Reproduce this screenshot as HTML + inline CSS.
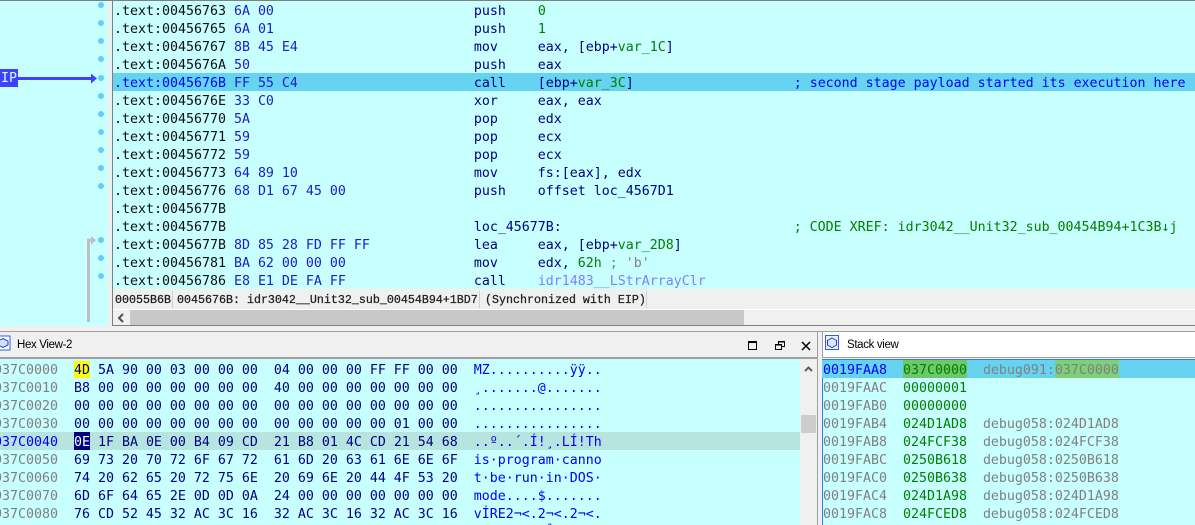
<!DOCTYPE html>
<html><head><meta charset="utf-8">
<style>
html,body{margin:0;padding:0;width:1195px;height:525px;overflow:hidden;background:#f0f0f0}
.a{position:absolute}
.p{position:absolute;overflow:hidden;background:#c8ffff}
.r{position:absolute;left:0;right:0;height:18px;white-space:pre;font:13.29px/22px "DejaVu Sans Mono","Liberation Mono",monospace;color:#101010}
.hl{background:#66d4f0}
.b{color:#1c1ccc}.m{color:#000080}.g{color:#008000}.c{color:#0000ff}.l{color:#8080ff}.y{color:#808080}
.dot{position:absolute;left:98px;width:6px;height:6px;border-radius:50%;background:#66ccff}
.st{position:absolute;top:289px;height:20px;font:11.67px/23px "Liberation Mono",monospace;color:#202020;white-space:pre;-webkit-text-stroke:.25px #202020}
.hx{color:#000080}.as{color:#0000ff}
.t{font:11.5px/14px "Liberation Sans",sans-serif;letter-spacing:-.35px;color:#000;position:absolute;white-space:pre}
</style></head><body>

<!-- top disassembly panel -->
<div class="a" style="left:0;top:0;width:1195px;height:1px;background:#808080"></div>
<div class="p" style="left:0;top:1px;width:108px;height:325px"></div>
<div class="a" style="left:108px;top:1px;width:4px;height:325px;background:#f0f0f0"></div>
<div class="a" style="left:112px;top:1px;width:1px;height:325px;background:#808080"></div>
<div class="p" style="left:113px;top:1px;width:1082px;height:288px">
<div style="position:absolute;left:1px;top:0;right:0;bottom:0">
<div class="r" style="top:0">.text:00456763 <span class="b">6A 00</span>                         <span class="m">push    </span><span class="g">0</span></div>
<div class="r" style="top:18px">.text:00456765 <span class="b">6A 01</span>                         <span class="m">push    </span><span class="g">1</span></div>
<div class="r" style="top:36px">.text:00456767 <span class="b">8B 45 E4</span>                      <span class="m">mov     eax, [ebp+</span><span class="g">var_1C</span><span class="m">]</span></div>
<div class="r" style="top:54px">.text:0045676A <span class="b">50</span>                            <span class="m">push    eax</span></div>
<div class="r hl" style="top:72px;left:-1px;padding-left:1px"><span class="c">.text:0045676B </span><span class="b">FF 55 C4</span>                      <span class="m">call    [ebp+</span><span class="g">var_3C</span><span class="m">]</span>                    <span class="c">; second stage payload started its execution here</span></div>
<div class="r" style="top:90px">.text:0045676E <span class="b">33 C0</span>                         <span class="m">xor     eax, eax</span></div>
<div class="r" style="top:108px">.text:00456770 <span class="b">5A</span>                            <span class="m">pop     edx</span></div>
<div class="r" style="top:126px">.text:00456771 <span class="b">59</span>                            <span class="m">pop     ecx</span></div>
<div class="r" style="top:144px">.text:00456772 <span class="b">59</span>                            <span class="m">pop     ecx</span></div>
<div class="r" style="top:162px">.text:00456773 <span class="b">64 89 10</span>                      <span class="m">mov     fs:[eax], edx</span></div>
<div class="r" style="top:180px">.text:00456776 <span class="b">68 D1 67 45 00</span>                <span class="m">push    offset loc_4567D1</span></div>
<div class="r" style="top:198px">.text:0045677B</div>
<div class="r" style="top:216px">.text:0045677B                               <span class="m">loc_45677B:</span>                             <span class="g">; CODE XREF: idr3042__Unit32_sub_00454B94+1C3B↓j</span></div>
<div class="r" style="top:234px">.text:0045677B <span class="b">8D 85 28 FD FF FF</span>             <span class="m">lea     eax, [ebp+</span><span class="g">var_2D8</span><span class="m">]</span></div>
<div class="r" style="top:252px">.text:00456781 <span class="b">BA 62 00 00 00</span>                <span class="m">mov     edx, </span><span class="g">62h</span> <span class="y">; 'b'</span></div>
<div class="r" style="top:270px">.text:00456786 <span class="b">E8 E1 DE FA FF</span>                <span class="m">call    </span><span class="l">idr1483__LStrArrayClr</span></div>
</div></div>

<!-- gutter dots -->
<div class="dot" style="top:2px"></div><div class="dot" style="top:20px"></div><div class="dot" style="top:38px"></div><div class="dot" style="top:56px"></div><div class="dot" style="top:75px"></div><div class="dot" style="top:93px"></div><div class="dot" style="top:111px"></div><div class="dot" style="top:129px"></div><div class="dot" style="top:147px"></div><div class="dot" style="top:165px"></div><div class="dot" style="top:183px"></div><div class="dot" style="top:237px"></div><div class="dot" style="top:255px"></div><div class="dot" style="top:273px"></div>

<!-- IP + arrows -->
<div class="a" style="left:0;top:69px;width:18px;height:18px;background:#4040ff;color:#c8ffff;font:13.29px/19px 'DejaVu Sans Mono',monospace;text-align:center">IP</div>
<svg class="a" style="left:0;top:0" width="112" height="330">
<rect x="18" y="77" width="74" height="3" fill="#4040ff"/>
<path d="M91 73.5 L97 78.5 L91 83.5 Z" fill="#4040ff"/>
<path d="M88.5 322 V240 H92" fill="none" stroke="#c0c0c0" stroke-width="3"/>
<path d="M91 236 L96 240 L91 245 Z" fill="#c0c0c0"/>
</svg>

<!-- status bar -->
<div class="a" style="left:113px;top:289px;width:1082px;height:20px;background:#f0f0f0"></div>
<div class="st" style="left:115px">00055B6B</div>
<div class="a" style="left:172px;top:291px;width:1px;height:17px;background:#d0d0d0"></div>
<div class="st" style="left:177px">0045676B: idr3042__Unit32_sub_00454B94+1BD7</div>
<div class="a" style="left:479px;top:291px;width:1px;height:17px;background:#d0d0d0"></div>
<div class="st" style="left:485px">(Synchronized with EIP)</div>
<div class="a" style="left:646px;top:291px;width:1px;height:17px;background:#d0d0d0"></div>

<!-- horizontal scrollbar -->
<div class="a" style="left:113px;top:309px;width:1082px;height:1px;background:#fff"></div>
<div class="a" style="left:113px;top:310px;width:1082px;height:15px;background:#f0f0f0"></div>
<div class="a" style="left:130px;top:310px;width:614px;height:15px;background:#c8c8c8"></div>
<svg class="a" style="left:113px;top:310px" width="17" height="15"><path d="M10 4 L6 8 L10 12" fill="none" stroke="#505050" stroke-width="2"/></svg>
<div class="a" style="left:113px;top:325px;width:1082px;height:1px;background:#808080"></div>
<div class="a" style="left:0;top:326px;width:1195px;height:5px;background:#f0f0f0"></div>
<div class="a" style="left:0;top:331px;width:1195px;height:1px;background:#a0a0a0"></div>

<!-- hex title -->
<div class="a" style="left:0;top:332px;width:817px;height:25px;background:#f0f0f0;border-right:1px solid #a0a0a0;border-bottom:1px solid #a0a0a0"></div>
<svg class="a" style="left:0;top:335px" width="12" height="16"><rect x="-4" y="1" width="14" height="14" fill="#fff" stroke="#3060e0"/><path d="M3 3.5 L8 6 V10 L3 12.5 L-2 10 V6 Z" fill="#d0e0ff" stroke="#2040d0"/></svg>
<div class="t" style="left:17px;top:338px">Hex View-2</div>
<svg class="a" style="left:740px;top:334px" width="80" height="20" fill="none" stroke="#000">
<rect x="8.5" y="7.5" width="8" height="8" stroke-width="1"/><path d="M8 8 H17" stroke-width="2"/>
<rect x="35.5" y="10.5" width="6" height="5"/><path d="M38.5 10 V7.5 H44.5 V12.5 H42" /><path d="M35 11 H42 M38 8 H45"/>
<path d="M62 8 L70 16 M70 8 L62 16" stroke-width="1.5"/>
</svg>
<div class="a" style="left:0;top:358px;width:818px;height:1px;background:#a0a0a0"></div>

<!-- hex panel -->
<div class="p" style="left:0;top:359px;width:800px;height:166px;background:#c8ffff">
<div class="a" style="left:0;top:73px;width:800px;height:18px;background:#b8e4e0"></div>
</div>
<div class="a" style="left:800px;top:359px;width:17px;height:166px;background:#f0f0f0"></div>
<div class="a" style="left:801px;top:415px;width:15px;height:18px;background:#cdcdcd"></div>
<svg class="a" style="left:800px;top:362px" width="17" height="14"><path d="M5 9 L8.5 5.5 L12 9" fill="none" stroke="#606060" stroke-width="2"/></svg>
<div class="a" style="left:817px;top:359px;width:1px;height:166px;background:#a0a0a0"></div>
<div class="a" style="left:-6px;top:360px;width:806px;height:165px;overflow:hidden">
<div class="a" style="left:80px;top:1px;width:16px;height:17px;background:#ffff00"></div>
<div class="a" style="left:80px;top:72px;width:16px;height:18px;background:#000080"></div>
<div class="r" style="top:0"><span class="y">037C0000</span>  <span class="hx">4D 5A 90 00 03 00 00 00  04 00 00 00 FF FF 00 00</span>  <span class="as">MZ..........ÿÿ..</span></div>
<div class="r" style="top:18px"><span class="y">037C0010</span>  <span class="hx">B8 00 00 00 00 00 00 00  40 00 00 00 00 00 00 00</span>  <span class="as">¸.......@.......</span></div>
<div class="r" style="top:36px"><span class="y">037C0020</span>  <span class="hx">00 00 00 00 00 00 00 00  00 00 00 00 00 00 00 00</span>  <span class="as">................</span></div>
<div class="r" style="top:54px"><span class="y">037C0030</span>  <span class="hx">00 00 00 00 00 00 00 00  00 00 00 00 00 01 00 00</span>  <span class="as">................</span></div>
<div class="r" style="top:72px"><span class="c">037C0040</span>  <span class="hx"><span style="color:#fff">0E</span> 1F BA 0E 00 B4 09 CD  21 B8 01 4C CD 21 54 68</span>  <span class="as">..º..´.Í!¸.LÍ!Th</span></div>
<div class="r" style="top:90px"><span class="y">037C0050</span>  <span class="hx">69 73 20 70 72 6F 67 72  61 6D 20 63 61 6E 6E 6F</span>  <span class="as">is·program·canno</span></div>
<div class="r" style="top:108px"><span class="y">037C0060</span>  <span class="hx">74 20 62 65 20 72 75 6E  20 69 6E 20 44 4F 53 20</span>  <span class="as">t·be·run·in·DOS·</span></div>
<div class="r" style="top:126px"><span class="y">037C0070</span>  <span class="hx">6D 6F 64 65 2E 0D 0D 0A  24 00 00 00 00 00 00 00</span>  <span class="as">mode....$.......</span></div>
<div class="r" style="top:144px"><span class="y">037C0080</span>  <span class="hx">76 CD 52 45 32 AC 3C 16  32 AC 3C 16 32 AC 3C 16</span>  <span class="as">vÍRE2¬&lt;.2¬&lt;.2¬&lt;.</span></div>
<div class="r" style="top:162px">                                                            <span class="as">         Î</span></div>
</div>

<!-- stack -->
<div class="a" style="left:822px;top:332px;width:373px;height:25px;background:#fff;border-left:1px solid #a0a0a0;box-sizing:border-box"></div>
<div class="a" style="left:822px;top:357px;width:373px;height:1px;background:#a0a0a0"></div>
<svg class="a" style="left:825px;top:335px" width="16" height="16"><rect x="0.5" y="0.5" width="13" height="14" fill="#e8f0ff" stroke="#3060e0"/><path d="M7 3 L11.5 5.5 V10 L7 12.5 L2.5 10 V5.5 Z" fill="#e0e8ff" stroke="#2040d0"/></svg>
<div class="t" style="left:847px;top:338px">Stack view</div>
<div class="p" style="left:822px;top:359px;width:373px;height:166px">
<div class="a" style="left:0;top:0;width:373px;height:1px;background:#3080e0"></div>
<div class="a" style="left:0;top:0;width:1px;height:166px;background:#3080e0"></div>
<div class="a" style="left:0;top:1px;width:373px;height:18px;background:#66d4f0"></div>
<div class="a" style="left:81px;top:1px;width:64px;height:18px;background:#6cc868"></div>
<div class="a" style="left:233px;top:1px;width:64px;height:18px;background:#7cd078"></div>
<div class="r" style="top:1px;left:1px"><span class="c">0019FAA8</span>  <span class="g">037C0000</span>  <span class="y">debug091:037C0000</span></div>
<div class="r" style="top:19px;left:1px"><span class="y">0019FAAC</span>  <span class="g">00000001</span></div>
<div class="r" style="top:37px;left:1px"><span class="y">0019FAB0</span>  <span class="g">00000000</span></div>
<div class="r" style="top:55px;left:1px"><span class="y">0019FAB4</span>  <span class="g">024D1AD8</span>  <span class="y">debug058:024D1AD8</span></div>
<div class="r" style="top:73px;left:1px"><span class="y">0019FAB8</span>  <span class="g">024FCF38</span>  <span class="y">debug058:024FCF38</span></div>
<div class="r" style="top:91px;left:1px"><span class="y">0019FABC</span>  <span class="g">0250B618</span>  <span class="y">debug058:0250B618</span></div>
<div class="r" style="top:109px;left:1px"><span class="y">0019FAC0</span>  <span class="g">0250B638</span>  <span class="y">debug058:0250B638</span></div>
<div class="r" style="top:127px;left:1px"><span class="y">0019FAC4</span>  <span class="g">024D1A98</span>  <span class="y">debug058:024D1A98</span></div>
<div class="r" style="top:145px;left:1px"><span class="y">0019FAC8</span>  <span class="g">024FCED8</span>  <span class="y">debug058:024FCED8</span></div>
</div>
</body></html>
